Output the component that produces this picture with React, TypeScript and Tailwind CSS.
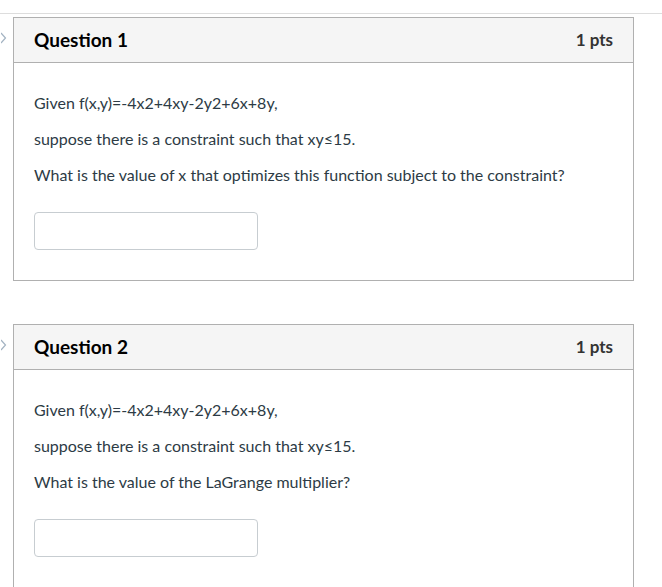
const questions = [
  {
    title: "Question 1",
    ask: "What is the value of x that optimizes this function subject to the constraint?",
  },
  {
    title: "Question 2",
    ask: "What is the value of the LaGrange multiplier?",
  },
];

function Chevron() {
  return (
    <svg
      className="absolute left-[-13px] top-[14px]"
      width="6"
      height="12"
      viewBox="0 0 6 12"
      fill="none"
    >
      <path d="M0 1 L4.5 6 L0 11" stroke="#a3b3c2" strokeWidth="1.2" />
    </svg>
  );
}

function QuestionCard({ title, ask }: { title: string; ask: string }) {
  return (
    <div className="relative border border-[#b0b0b0] bg-white">
      <Chevron />
      <div className="flex h-[45px] items-center justify-between border-b border-[#b0b0b0] bg-[#f5f5f5] pl-5 pr-5">
        <span className="text-[19px] font-bold text-black">{title}</span>
        <span className="text-[17px] font-bold text-[#333]">1 pts</span>
      </div>
      <div className="px-5 pt-[28px] pb-[30px] text-[16px] text-[#2d3b45]">
        <div className="flex flex-col gap-3 leading-[24px]">
          <p>Given f(x,y)=-4x2+4xy-2y2+6x+8y,</p>
          <p>suppose there is a constraint such that xy≤15.</p>
          <p>{ask}</p>
        </div>
        <div className="mt-[25px] h-[38px] w-[224px] rounded-[4px] border border-[#c7cdd1] bg-white" />
      </div>
    </div>
  );
}

export default function App() {
  return (
    <div
      className="min-h-screen bg-white"
      style={{ fontFamily: "Lato, 'Liberation Sans', sans-serif" }}
    >
      <div className="h-[14px] border-b border-[#dddddd]" />
      <div className="flex w-[634px] flex-col gap-[43px] pl-[13px] pt-[3px]">
        {questions.map((q) => (
          <QuestionCard key={q.title} title={q.title} ask={q.ask} />
        ))}
      </div>
    </div>
  );
}
